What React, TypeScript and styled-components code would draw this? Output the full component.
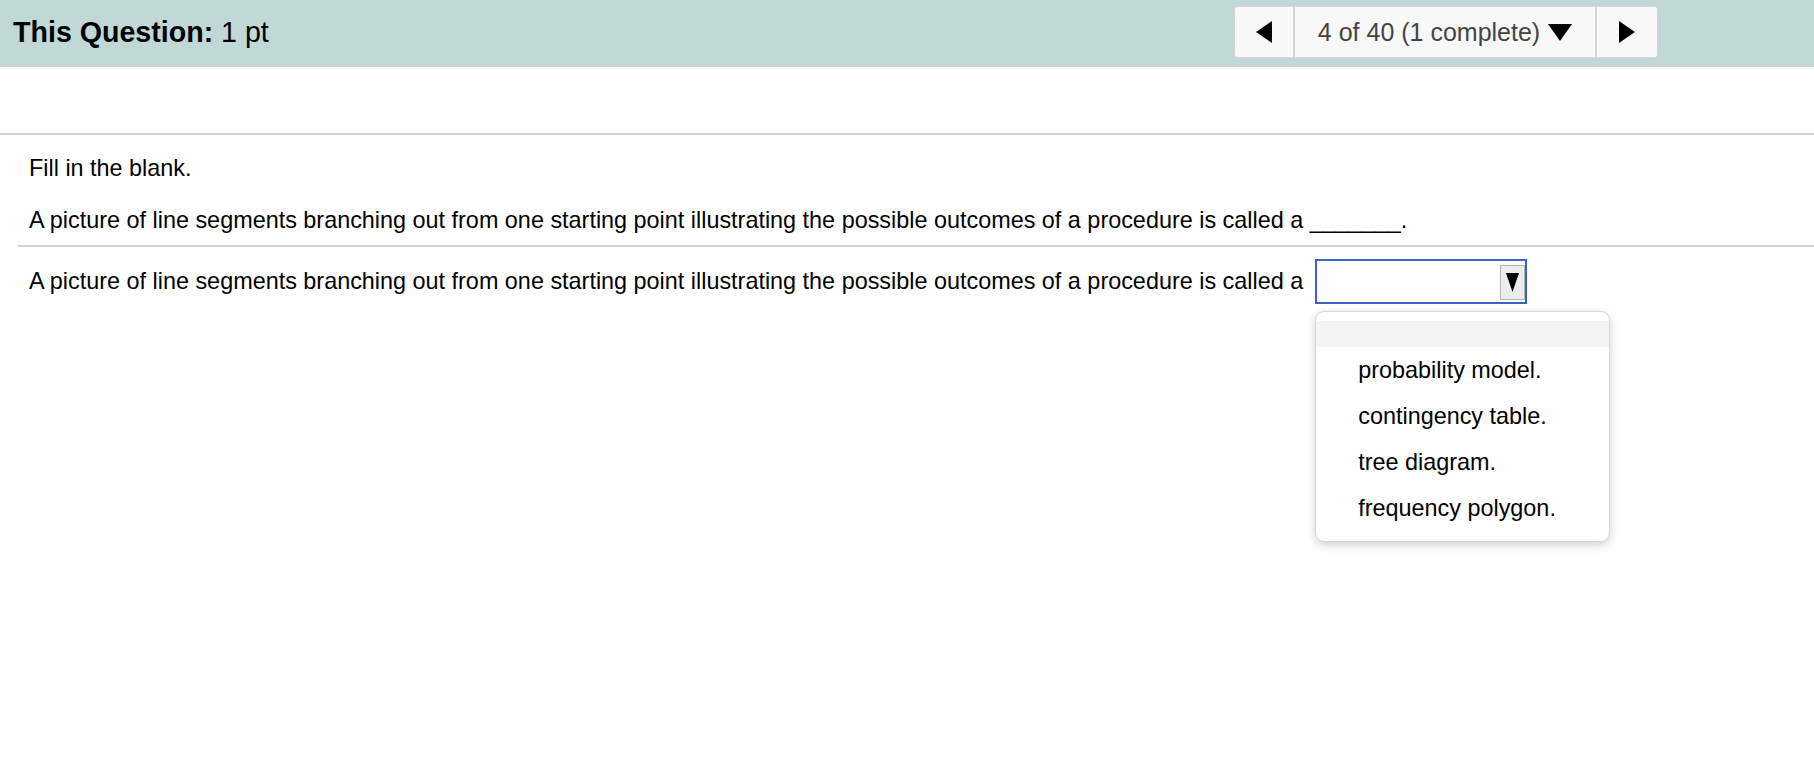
import React from "react";
import styled, { createGlobalStyle } from "styled-components";

const GlobalStyle = createGlobalStyle`
  html, body {
    margin: 0;
    padding: 0;
    background: #ffffff;
  }
  body {
    font-family: "Liberation Sans", Arial, Helvetica, sans-serif;
    color: #000;
  }
  #root {
    min-height: 100vh;
  }
`;

const Page = styled.div`
  min-height: 762px;
  background: #fff;
`;

const Header = styled.div`
  height: 65px;
  background: #c0d9d6;
  border-bottom: 2px solid #cfd1dc;
  display: flex;
  align-items: center;
  justify-content: space-between;
`;

const Title = styled.div`
  padding-left: 13px;
  font-size: 28.6px;
  b {
    font-weight: 700;
  }
`;

const Nav = styled.div`
  display: flex;
  height: 52px;
  margin-right: 156px;
  margin-top: -1px;
`;

const NavButton = styled.button<{ $w: number; $pos: "left" | "mid" | "right" }>`
  width: ${(p) => p.$w}px;
  height: 100%;
  display: flex;
  align-items: center;
  justify-content: center;
  gap: 8px;
  background: #f8f8f8;
  border: 1px solid #d4d4d4;
  border-left-width: ${(p) => (p.$pos === "left" ? 1 : 0)}px;
  border-right-width: ${(p) => (p.$pos === "mid" ? 2 : 1)}px;
  border-radius: ${(p) =>
    p.$pos === "left" ? "4px 0 0 4px" : p.$pos === "right" ? "0 4px 4px 0" : "0"};
  ${(p) => (p.$pos === "left" ? "border-right: 2px solid #d4d4d4;" : "")}
  padding: 0;
  font-family: "Liberation Sans", Arial, sans-serif;
  font-size: 25px;
  color: #444;
  cursor: pointer;
`;

const Spacer = styled.div`
  height: 66px;
  border-bottom: 2px solid #cfd1dc;
`;

const Body = styled.div`
  font-size: 23.4px;
  line-height: 27px;
  padding-top: 20px;
`;

const Para = styled.p<{ $mb: number }>`
  margin: 0 0 ${(p) => p.$mb}px 29px;
`;

const Rule = styled.div`
  margin-left: 18px;
  height: 1px;
  border-top: 2px solid #cfd1dc;
`;

const AnswerRow = styled.div`
  display: flex;
  align-items: center;
  margin: 11px 0 0 29px;
  gap: 12px;
`;

const SelectWrap = styled.div`
  position: relative;
  z-index: 5;
`;

const SelectBox = styled.div`
  width: 208px;
  height: 41px;
  border: 2px solid #4062c4;
  display: flex;
  justify-content: flex-end;
  align-items: flex-start;
  background: #fff;
`;

const ArrowButton = styled.div`
  width: 23px;
  height: 33px;
  margin-top: 4px;
  background: #ececec;
  border: 1px solid #b4b4b4;
  display: flex;
  align-items: center;
  justify-content: center;
`;

const Menu = styled.div`
  position: absolute;
  z-index: 10;
  top: 52px;
  left: 0;
  width: 293px;
  padding: 9px 0 10px;
  background: #fff;
  border: 1px solid #d6d6d6;
  border-radius: 9px;
  box-shadow: 0 3px 10px rgba(0, 0, 0, 0.18);
`;

const MenuItem = styled.div<{ $blank?: boolean }>`
  height: ${(p) => (p.$blank ? 26 : 46)}px;
  line-height: ${(p) => (p.$blank ? 26 : 46)}px;
  padding-left: 42px;
  background: ${(p) => (p.$blank ? "#f4f4f4" : "#fff")};
  color: #000;
  white-space: nowrap;
`;

const Tri = ({ dir, w, h }: { dir: "left" | "right" | "down"; w: number; h: number }) => {
  const pts =
    dir === "left"
      ? `${w},0 ${w},${h} 0,${h / 2}`
      : dir === "right"
      ? `0,0 0,${h} ${w},${h / 2}`
      : `0,0 ${w},0 ${w / 2},${h}`;
  return (
    <svg width={w} height={h} viewBox={`0 0 ${w} ${h}`}>
      <polygon points={pts} fill="#000" />
    </svg>
  );
};

const question =
  "A picture of line segments branching out from one starting point illustrating the possible outcomes of a procedure is called a";

const options = ["probability model.", "contingency table.", "tree diagram.", "frequency polygon."];

export default function App() {
  return (
    <Page>
      <GlobalStyle />
      <Header>
        <Title>
          <b>This Question:</b> 1 pt
        </Title>
        <Nav>
          <NavButton $w={61} $pos="left">
            <Tri dir="left" w={16} h={22} />
          </NavButton>
          <NavButton $w={302} $pos="mid">
            <span>4 of 40 (1 complete)</span>
            <Tri dir="down" w={24} h={17} />
          </NavButton>
          <NavButton $w={61} $pos="right">
            <Tri dir="right" w={16} h={22} />
          </NavButton>
        </Nav>
      </Header>
      <Spacer />
      <Body>
        <Para $mb={25}>Fill in the blank.</Para>
        <Para $mb={11}>{question} _______.</Para>
        <Rule />
        <AnswerRow>
          <span>{question}</span>
          <SelectWrap>
            <SelectBox>
              <ArrowButton>
                <Tri dir="down" w={13} h={19} />
              </ArrowButton>
            </SelectBox>
            <Menu role="listbox">
              <MenuItem $blank />
              {options.map((o) => (
                <MenuItem key={o}>{o}</MenuItem>
              ))}
            </Menu>
          </SelectWrap>
        </AnswerRow>
      </Body>
    </Page>
  );
}
